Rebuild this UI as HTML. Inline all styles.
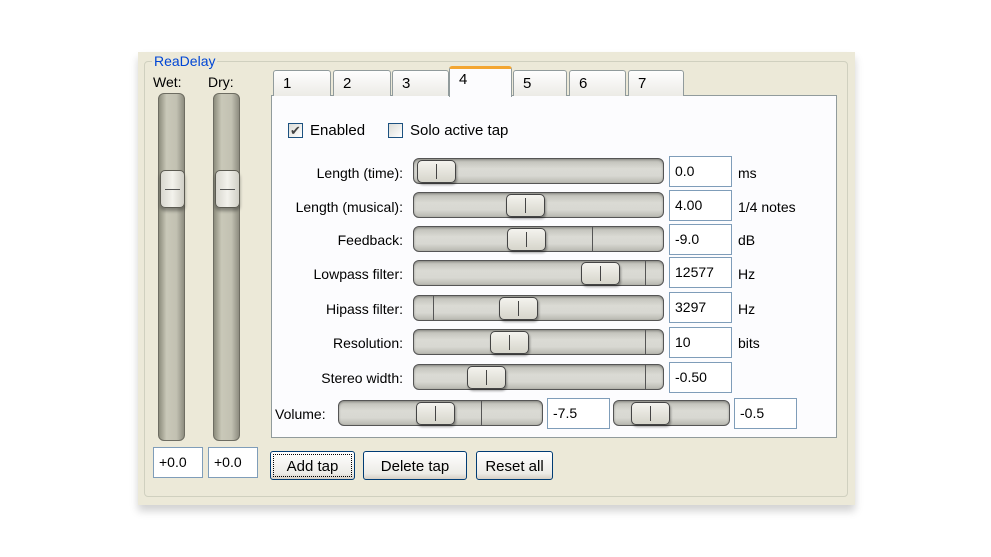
<!DOCTYPE html>
<html><head><style>
*{box-sizing:border-box;margin:0;padding:0}
body{width:991px;height:557px;background:#fff;position:relative;overflow:hidden;font-family:"Liberation Sans",sans-serif;font-size:14px;color:#000}
.a{position:absolute}
.win{left:138px;top:52px;width:717px;height:453px;background:#ece9d8;box-shadow:0 6px 8px rgba(0,0,0,.18)}
.grp{left:144px;top:61px;width:704px;height:436px;border:1px solid #d0d0bf;border-radius:4px}
.tab{position:absolute;top:70px;height:26px;border:1px solid #919b9c;border-bottom:none;border-radius:3px 3px 0 0;background:linear-gradient(#fefefe,#ecebe6);padding:4px 0 0 9px;font-size:15px}
.panel{left:271px;top:95px;width:566px;height:343px;background:#fcfcfe;border:1px solid #919b9c}
.vt{position:absolute;width:27px;border-radius:6px;background:linear-gradient(90deg,#8d8d7d,#c9c8b8 30%,#c2c1b2 70%,#8e8d80);border:1px solid #6e6d62}
.vth{position:absolute;width:25px;height:38px;border:1px solid #5c5b52;border-radius:5px;background:linear-gradient(90deg,#d8d7cf,#f3f2ec 50%,#d0cfc6);box-shadow:0 3px 3px rgba(0,0,0,.35)}
.vth:after{content:"";position:absolute;left:4px;right:4px;top:18px;border-top:1px solid #555}
.ht{position:absolute;height:26px;border:1px solid #555;border-radius:6px;background:linear-gradient(#bdbdb5,#dadad4 40%,#d8d8d2 70%,#b8b8b0);box-shadow:inset 0 1px 2px rgba(0,0,0,.3)}
.tick{position:absolute;top:0;bottom:0;border-left:1px solid #555}
.hth{position:absolute;top:1px;width:39px;height:23px;border:1px solid #444;border-radius:5px;background:linear-gradient(#f4f3ee,#d6d5cb);box-shadow:1px 2px 2px rgba(0,0,0,.35)}
.hth:after{content:"";position:absolute;left:18px;top:3px;bottom:3px;border-left:1px solid #444}
.ed{position:absolute;background:#fff;border:1px solid #7f9db9;padding:6px 0 0 5px;font-size:14px;height:31px;width:63px}
.lab{position:absolute;right:588px;text-align:right;font-size:14px;white-space:nowrap}
.unit{position:absolute;left:738px;font-size:14px}
.btn{position:absolute;top:451px;height:29px;border:1px solid #003c74;border-radius:3px;background:linear-gradient(#fff,#ecebe6 80%,#d6d0c5);text-align:center;padding-top:6px;font-size:15px}
.cb{position:absolute;top:123px;width:15px;height:15px;border:1px solid #1c5180;background:linear-gradient(135deg,#dcdcd7,#fff)}
</style></head><body>
<div class="a win"></div>
<div class="a grp"></div>
<div class="a" style="left:152px;top:53px;background:#ece9d8;padding:0 2px;color:#0046d5;font-size:14px">ReaDelay</div>
<div class="a" style="left:153px;top:74px">Wet:</div>
<div class="a" style="left:208px;top:74px">Dry:</div>
<div class="vt" style="left:158px;top:93px;height:348px"></div>
<div class="vth" style="left:160px;top:170px"></div>
<div class="vt" style="left:213px;top:93px;height:348px"></div>
<div class="vth" style="left:215px;top:170px"></div>
<div class="ed" style="left:153px;top:447px;width:50px">+0.0</div>
<div class="ed" style="left:208px;top:447px;width:50px">+0.0</div>

<div class="a panel"></div>
<div class="tab" style="left:273px;width:58px">1</div>
<div class="tab" style="left:333px;width:58px">2</div>
<div class="tab" style="left:392px;width:57px">3</div>
<div class="tab" style="left:449px;top:66px;height:31px;width:63px;background:#fcfcfe;border-top:3px solid #f3a632;padding-top:2px;z-index:2">4</div>
<div class="tab" style="left:513px;width:54px">5</div>
<div class="tab" style="left:569px;width:57px">6</div>
<div class="tab" style="left:628px;width:56px">7</div>

<div class="cb" style="left:288px;color:#444;font-size:13px;line-height:13px;text-align:center">✔</div>
<div class="a" style="left:310px;top:122px;font-size:15px">Enabled</div>
<div class="cb" style="left:388px"></div>
<div class="a" style="left:410px;top:122px;font-size:15px">Solo active tap</div>

<div class="lab" style="top:165px">Length (time):</div>
<div class="ht" style="left:413px;top:158px;width:251px"><div class="hth" style="left:3px"></div></div>
<div class="ed" style="left:669px;top:156px">0.0</div><div class="unit" style="top:165px">ms</div>

<div class="lab" style="top:199px">Length (musical):</div>
<div class="ht" style="left:413px;top:192px;width:251px"><div class="hth" style="left:92px"></div></div>
<div class="ed" style="left:669px;top:190px">4.00</div><div class="unit" style="top:199px">1/4 notes</div>

<div class="lab" style="top:232px">Feedback:</div>
<div class="ht" style="left:413px;top:226px;width:251px"><div class="tick" style="left:178px"></div><div class="hth" style="left:93px"></div></div>
<div class="ed" style="left:669px;top:224px">-9.0</div><div class="unit" style="top:232px">dB</div>

<div class="lab" style="top:266px">Lowpass filter:</div>
<div class="ht" style="left:413px;top:260px;width:251px"><div class="tick" style="left:231px"></div><div class="hth" style="left:167px"></div></div>
<div class="ed" style="left:669px;top:257px">12577</div><div class="unit" style="top:266px">Hz</div>

<div class="lab" style="top:301px">Hipass filter:</div>
<div class="ht" style="left:413px;top:295px;width:251px"><div class="tick" style="left:19px"></div><div class="hth" style="left:85px"></div></div>
<div class="ed" style="left:669px;top:292px">3297</div><div class="unit" style="top:301px">Hz</div>

<div class="lab" style="top:335px">Resolution:</div>
<div class="ht" style="left:413px;top:329px;width:251px"><div class="tick" style="left:231px"></div><div class="hth" style="left:76px"></div></div>
<div class="ed" style="left:669px;top:327px">10</div><div class="unit" style="top:335px">bits</div>

<div class="lab" style="top:370px">Stereo width:</div>
<div class="ht" style="left:413px;top:364px;width:251px"><div class="tick" style="left:231px"></div><div class="hth" style="left:53px"></div></div>
<div class="ed" style="left:669px;top:362px">-0.50</div>

<div class="a" style="left:275px;top:406px">Volume:</div>
<div class="ht" style="left:338px;top:400px;width:205px"><div class="tick" style="left:142px"></div><div class="hth" style="left:77px"></div></div>
<div class="ed" style="left:547px;top:398px">-7.5</div>
<div class="ht" style="left:613px;top:400px;width:117px"><div class="hth" style="left:17px"></div></div>
<div class="ed" style="left:734px;top:398px">-0.5</div>

<div class="btn" style="left:270px;width:85px;outline:1px dotted #000;outline-offset:-4px">Add tap</div>
<div class="btn" style="left:363px;width:104px">Delete tap</div>
<div class="btn" style="left:476px;width:77px">Reset all</div>
</body></html>
